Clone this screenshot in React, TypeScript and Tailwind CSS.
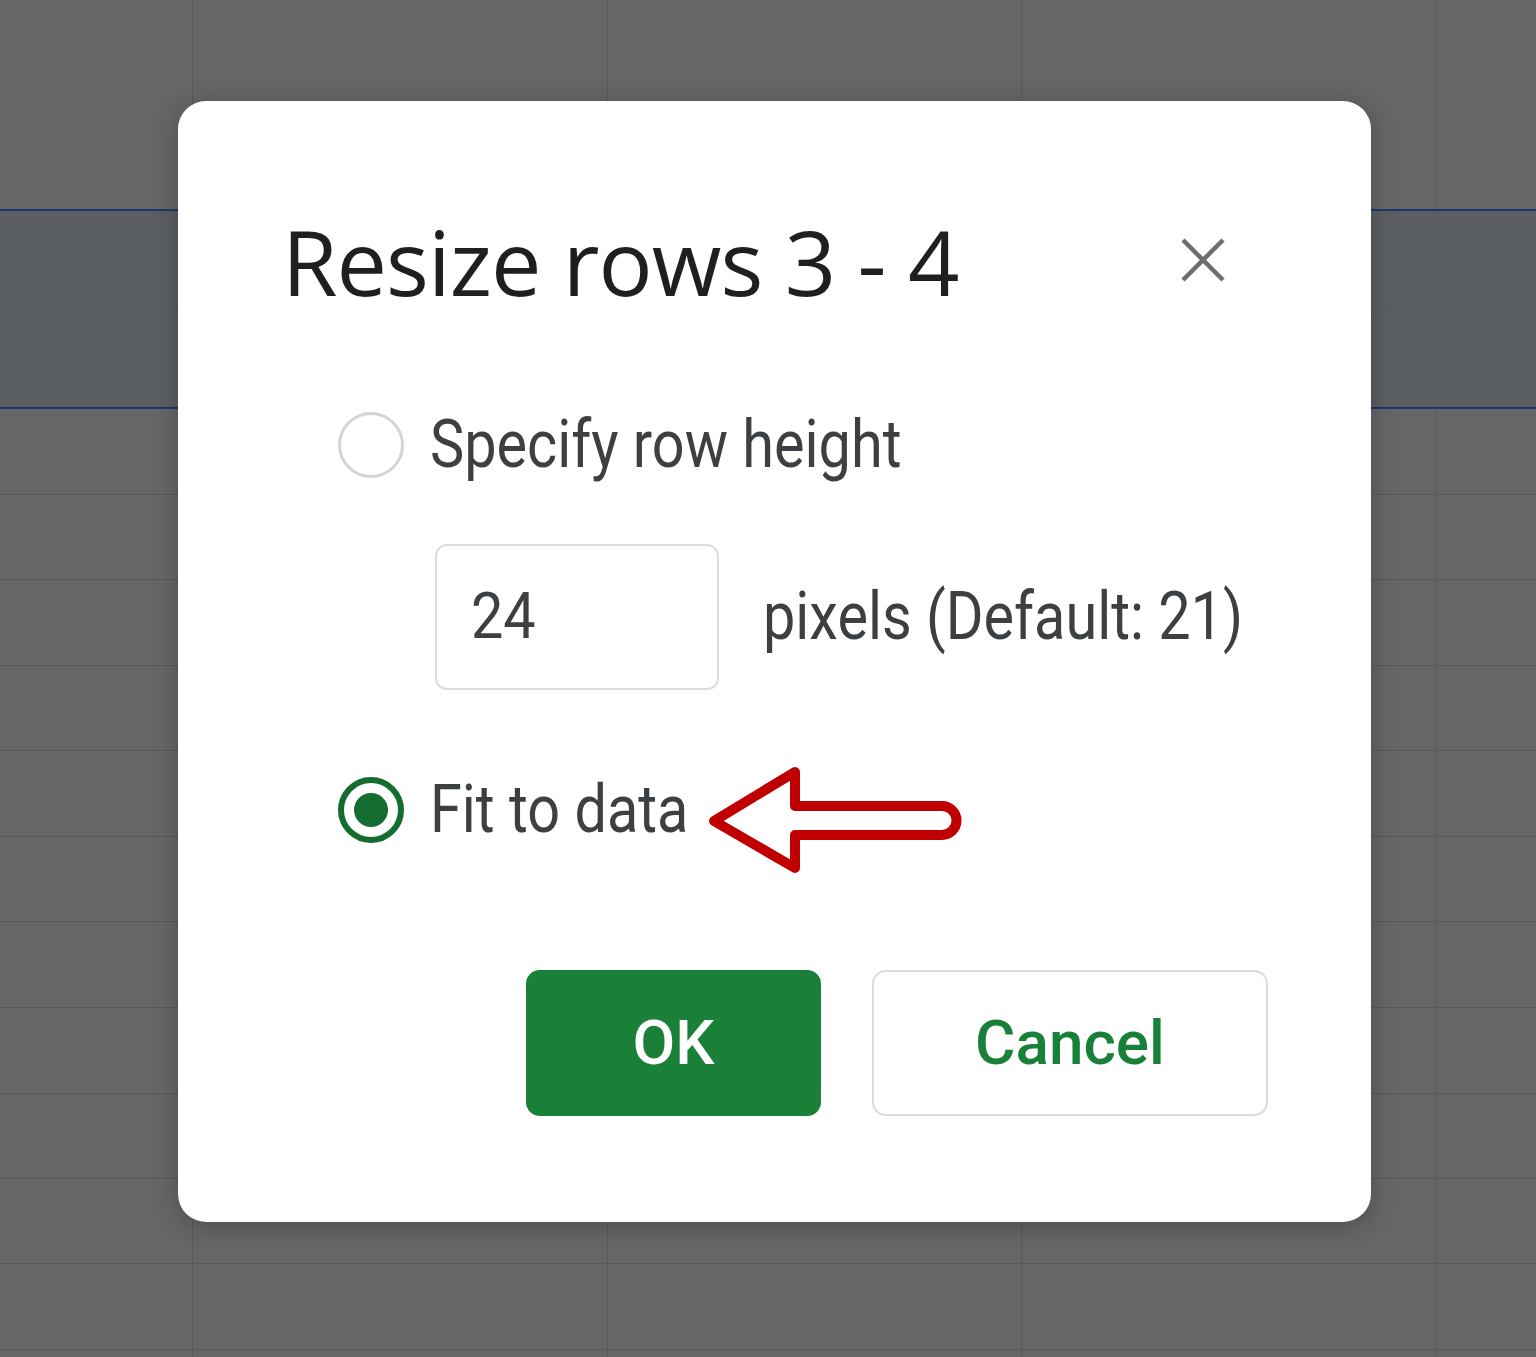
import React from "react";

const rows: { h: number; sel?: boolean; blue?: boolean }[] = [
  { h: 211, blue: true },
  { h: 100, sel: true },
  { h: 98, sel: true, blue: true },
  { h: 86 }, { h: 85 }, { h: 86 }, { h: 85 }, { h: 86 }, { h: 85 }, { h: 86 }, { h: 86 }, { h: 85 }, { h: 85 }, { h: 86 }, { h: 86 },
];

function GridRow({ h, sel, blue }: { h: number; sel?: boolean; blue?: boolean }) {
  return (
    <div
      className={`flex shrink-0 ${sel ? "bg-[#5b5e63]" : "bg-[#666666]"} ${blue ? "border-b-2 border-[#18386f]" : "border-b border-[#595959]"}`}
      style={{ height: h }}
    >
      <div className="w-[193px] shrink-0 border-r border-[#595959]" />
      <div className="w-[415px] shrink-0 border-r border-[#595959]" />
      <div className="w-[414px] shrink-0 border-r border-[#595959]" />
      <div className="w-[415px] shrink-0 border-r border-[#595959]" />
      <div className="flex-1" />
    </div>
  );
}

function Radio({ checked }: { checked?: boolean }) {
  return checked ? (
    <div className="w-[66px] h-[66px] rounded-full border-[6px] border-[#146c2e] flex items-center justify-center shrink-0">
      <div className="w-[34px] h-[34px] rounded-full bg-[#146c2e]" />
    </div>
  ) : (
    <div className="w-[66px] h-[66px] rounded-full border-[3px] border-[#d4d4d4] shrink-0" />
  );
}

function Narrow({ text, w, size = "text-[66px]" }: { text: string; w: string; size?: string }) {
  return (
    <span className={`${w} shrink-0 whitespace-nowrap overflow-visible`}>
      <span className={`inline-block origin-left scale-x-[0.873] ${size} leading-none text-[#3c4043]`}>{text}</span>
    </span>
  );
}

export default function App() {
  return (
    <div className="relative w-[1536px] h-[1357px] overflow-hidden bg-[#666666]" style={{ fontFamily: "Roboto, sans-serif" }}>
      <div className="flex flex-col">
        {rows.map((r, i) => (
          <GridRow key={i} {...r} />
        ))}
      </div>

      <div className="absolute left-[178px] top-[101px] w-[1193px] h-[1121px] bg-white rounded-[28px] shadow-[0_4px_24px_rgba(0,0,0,0.25)] flex flex-col">
        <div className="flex items-start justify-between pl-[104px] pr-[144px] pt-[115px]">
          <h1 className="text-[90px] leading-none text-[#1f1f1f] tracking-[-1px]" style={{ fontFamily: "'Open Sans', sans-serif" }}>
            Resize rows 3 - 4
          </h1>
          <svg width="48" height="48" viewBox="0 0 48 48" className="mt-[20px]">
            <path d="M4 4 L44 44 M44 4 L4 44" stroke="#6e6e6e" strokeWidth="4.5" strokeLinecap="butt" />
          </svg>
        </div>

        <div className="flex flex-col pl-[160px] mt-[106px]">
          <div className="flex items-center gap-[26px] h-[66px]">
            <Radio />
            <Narrow text="Specify row height" w="w-[470px]" />
          </div>

          <div className="flex items-center ml-[97px] mt-[66px]">
            <div className="w-[284px] h-[146px] border-2 border-[#dadce0] rounded-[12px] flex items-center pl-[34px]">
              <span className="inline-block origin-left scale-x-[0.9] text-[64px] leading-none text-[#3c4043]">24</span>
            </div>
            <span className="ml-[44px]">
              <Narrow text="pixels (Default: 21)" w="w-[480px]" />
            </span>
          </div>

          <div className="flex items-center mt-[87px] h-[66px]">
            <Radio checked />
            <span className="ml-[26px] flex">
              <Narrow text="Fit to data" w="w-[258px]" />
            </span>
            <svg width="270" height="120" viewBox="0 0 270 120" className="ml-[14px] mt-[20px] shrink-0">
              <path
                d="M12 61 L93 12 L93 46 L240 46 A14.5 14.5 0 0 1 240 75 L93 75 L93 108 Z"
                fill="none"
                stroke="#c00000"
                strokeWidth="10"
                strokeLinejoin="round"
              />
            </svg>
          </div>
        </div>

        <div className="flex justify-end gap-[51px] pr-[103px] mt-[127px]">
          <button className="w-[295px] h-[146px] rounded-[14px] bg-[#1a7f37] text-white text-[62px] font-medium leading-none">
            OK
          </button>
          <button className="w-[396px] h-[146px] rounded-[14px] border-2 border-[#dadce0] bg-white text-[#188038] text-[62px] font-medium leading-none">
            Cancel
          </button>
        </div>
      </div>
    </div>
  );
}
